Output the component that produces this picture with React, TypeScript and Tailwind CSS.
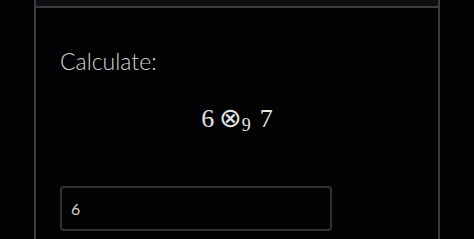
export default function App() {
  return (
    <div className="h-[239px] w-[474px] overflow-hidden bg-[#030305]">
      <div className="ml-[34px] w-[406px]">
        <div className="h-[8px] border-x-2 border-b-2 border-[#3c3c40] bg-[#0f0f12]" />
        <div className="h-[300px] border-x-2 border-[#3c3c40] bg-[#030305] px-[24px] pt-[38px]">
          <p className="text-[23px] font-light leading-[30px] text-[#d2d2d4] [font-family:Lato,'Noto_Sans',sans-serif]">
            Calculate:
          </p>
          <div className="mt-[27px] flex items-baseline justify-center text-[26px] leading-[30px] text-[#e4e4e4] [font-family:'Liberation_Serif',serif]">
            <span>6</span>
            <span className="ml-[5px] text-[27px] [font-family:'DejaVu_Sans',sans-serif]">⊗</span>
            <span className="relative top-[4px] text-[18px]">9</span>
            <span className="ml-[9px]">7</span>
          </div>
          <div className="mt-[50px] flex h-[45px] w-[272px] items-center rounded-[4px] border-2 border-[#333336] px-[9px]">
            <span className="text-[16px] text-[#d0d0d0] [font-family:Lato,sans-serif]">6</span>
          </div>
        </div>
      </div>
    </div>
  );
}
